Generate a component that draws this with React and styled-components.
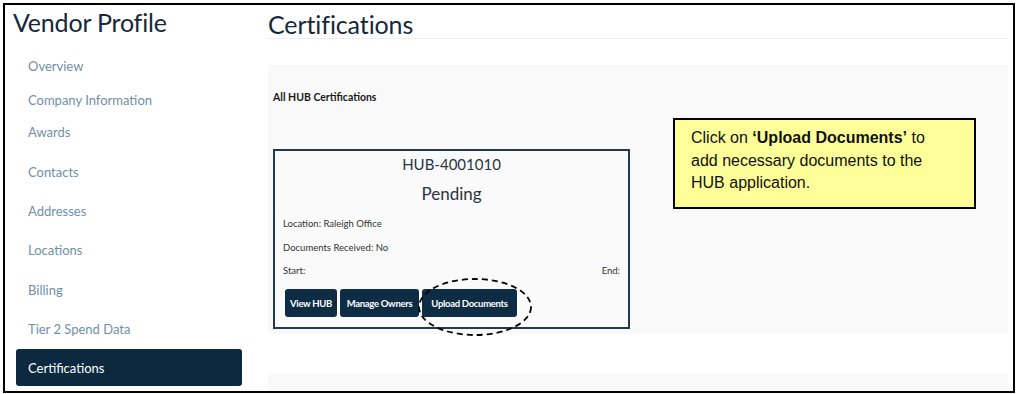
import React from 'react';
import styled, { createGlobalStyle } from 'styled-components';

const GlobalStyle = createGlobalStyle`
  html, body { margin: 0; padding: 0; background: #fff; }
  body { font-family: Lato, "Open Sans", sans-serif; }
`;

const Frame = styled.div`
  box-sizing: border-box;
  margin: 3px 4px 0 3px;
  width: 1012px;
  height: 390px;
  border: 2px solid #000;
  display: flex;
  overflow: hidden;
  background: #fff;
`;

const Sidebar = styled.div`
  width: 245px;
  flex-shrink: 0;
  display: flex;
  flex-direction: column;
`;

const SideTitle = styled.h1`
  margin: 0;
  padding: 2px 0 0 8px;
  height: 35px;
  font-weight: 400;
  font-size: 25px;
  color: #15283b;
  letter-spacing: -0.2px;
`;

const NavList = styled.ul`
  list-style: none;
  margin: 0;
  padding: 7px 0 0 11px;
`;

const NavItem = styled.li`
  box-sizing: border-box;
  width: 226px;
  height: ${p => p.$h}px;
  display: flex;
  align-items: center;
  padding-left: 12px;
  padding-bottom: ${p => p.$pb || 0}px;
  border-radius: 3px;
  font-size: 13px;
  color: ${p => (p.$active ? '#fff' : '#6f8faa')};
  background: ${p => (p.$active ? '#0c2940' : 'transparent')};
  margin-top: ${p => (p.$active ? 1 : 0)}px;
`;

const Main = styled.div`
  flex: 1;
  padding: 0 5px 0 18px;
  display: flex;
  flex-direction: column;
`;

const PageTitle = styled.h2`
  margin: 0;
  padding-top: 4px;
  height: 29px;
  font-weight: 400;
  font-size: 25px;
  color: #15283b;
  border-bottom: 1px solid #eeeeee;
  letter-spacing: -0.1px;
`;

const Panel = styled.div`
  margin-top: 26px;
  height: 269px;
  background: #f9f9f9;
  display: flex;
  flex-direction: column;
  padding: 26px 0 0 5px;
  box-sizing: border-box;
  position: relative;
`;

const PanelBottom = styled.div`
  margin-top: 39px;
  flex: 1;
  background: #f9f9f9;
`;

const SectionLabel = styled.div`
  font-size: 10.5px;
  font-weight: 700;
  color: #1a1a1a;
`;

const Card = styled.div`
  box-sizing: border-box;
  margin-top: 46px;
  width: 357px;
  height: 180px;
  border: 2px solid #1f3a52;
  background: #fafafa;
  padding: 3px 8px 0 8px;
  display: flex;
  flex-direction: column;
  position: relative;
`;

const CardId = styled.div`
  text-align: center;
  font-size: 15px;
  color: #2b3440;
  line-height: 20px;
`;

const CardStatus = styled.div`
  text-align: center;
  font-size: 17px;
  color: #2b3440;
  line-height: 24px;
  margin-top: 8px;
`;

const InfoRow = styled.div`
  display: flex;
  justify-content: space-between;
  font-size: 9.5px;
  color: #333;
  line-height: 14px;
  margin-top: ${p => p.$gap}px;
`;

const Buttons = styled.div`
  display: flex;
  gap: 3px;
  margin-top: 11px;
  margin-left: 2px;
`;

const Button = styled.button`
  height: 28px;
  padding: 0;
  border: none;
  border-radius: 3px;
  background: #0f2c45;
  color: #fff;
  font-family: inherit;
  font-weight: 700;
  font-size: 9.5px;
  letter-spacing: -0.3px;
  white-space: nowrap;
  width: ${p => p.$w}px;
`;

const Ellipse = styled.svg`
  position: absolute;
  left: 143px;
  top: 127px;
  overflow: visible;
`;

const Callout = styled.div`
  position: absolute;
  left: 405px;
  top: 53px;
  box-sizing: border-box;
  width: 303px;
  height: 91px;
  background: #ffff99;
  border: 2px solid #000;
  padding: 7px 10px 0 16px;
  font-family: "Liberation Sans", Arial, sans-serif;
  font-size: 16px;
  line-height: 22.5px;
  color: #111;
`;

// item heights follow the uneven spacing of the menu
const navItems = [
  { label: 'Overview', h: 34 },
  { label: 'Company Information', h: 33 },
  { label: 'Awards', h: 36, pb: 4 },
  { label: 'Contacts', h: 39 },
  { label: 'Addresses', h: 39 },
  { label: 'Locations', h: 40 },
  { label: 'Billing', h: 39 },
  { label: 'Tier 2 Spend Data', h: 39 },
];

export default function App() {
  return (
    <>
      <GlobalStyle />
      <Frame>
        <Sidebar>
          <SideTitle>Vendor Profile</SideTitle>
          <NavList>
            {navItems.map(item => (
              <NavItem key={item.label} $h={item.h} $pb={item.pb}>{item.label}</NavItem>
            ))}
            <NavItem $active $h={37}>Certifications</NavItem>
          </NavList>
        </Sidebar>
        <Main>
          <PageTitle>Certifications</PageTitle>
          <Panel>
            <SectionLabel>All HUB Certifications</SectionLabel>
            <Card>
              <CardId>HUB-4001010</CardId>
              <CardStatus>Pending</CardStatus>
              <InfoRow $gap={11}><span>Location: Raleigh Office</span></InfoRow>
              <InfoRow $gap={10}><span>Documents Received: No</span></InfoRow>
              <InfoRow $gap={9}><span>Start:</span><span>End:</span></InfoRow>
              <Buttons>
                <Button $w={52}>View HUB</Button>
                <Button $w={79}>Manage Owners</Button>
                <Button $w={95}>Upload Documents</Button>
              </Buttons>
              <Ellipse width="114" height="58" viewBox="0 0 114 58">
                <ellipse cx="57" cy="29" rx="56" ry="28" fill="none" stroke="#000" strokeWidth="1.8" strokeDasharray="6 4" />
              </Ellipse>
            </Card>
            <Callout>
              Click on <b>‘Upload Documents’</b> to<br />
              add necessary documents to the<br />
              HUB application.
            </Callout>
          </Panel>
          <PanelBottom />
        </Main>
      </Frame>
    </>
  );
}
